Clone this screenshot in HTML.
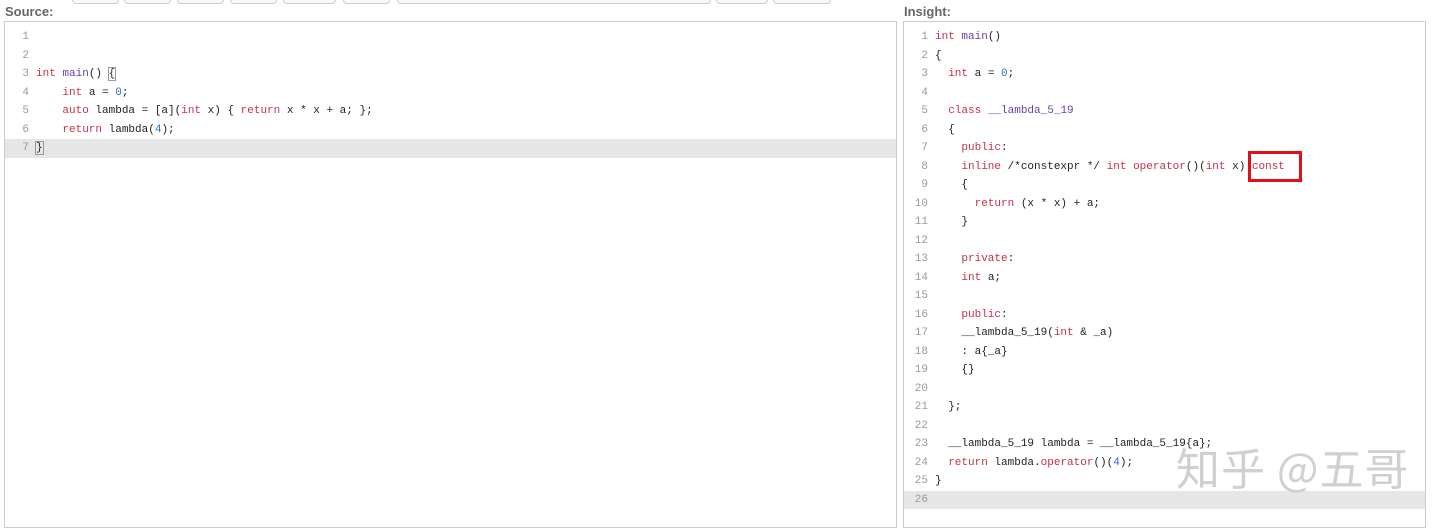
<!DOCTYPE html>
<html><head><meta charset="utf-8"><style>
body{margin:0;width:1440px;height:522px;background:#fff;position:relative;overflow:hidden;font-family:"Liberation Sans",sans-serif}
.lbl{position:absolute;top:4px;font-weight:bold;font-size:13px;color:#666}
.btn{position:absolute;top:-8px;height:10px;border:1px solid #ccc;border-radius:4px;background:#fafafa}
.panel{position:absolute;top:21px;border:1px solid #ccc;bottom:-6px}
.code{position:absolute;left:0;right:0;top:6px;font-family:"Liberation Mono",monospace;font-size:11px;color:#222}
.ln{height:18.5px;line-height:18.5px;white-space:pre;position:relative}
.n{display:inline-block;width:24px;text-align:right;color:#999;margin-right:7px}
.hl{background:#e6e6e6}
.k{color:#c8304a}.f{color:#6a3ea8}.d{color:#2f6fc0}
.wm{position:absolute;left:1176px;top:434px;font-family:"Noto Sans CJK SC",sans-serif;font-size:44px;color:#d0d0d0;letter-spacing:1px}
</style></head><body>
<div class="btn" style="left:72px;width:45px"></div>
<div class="btn" style="left:124px;width:45px"></div>
<div class="btn" style="left:177px;width:45px"></div>
<div class="btn" style="left:230px;width:45px"></div>
<div class="btn" style="left:283px;width:51px"></div>
<div class="btn" style="left:343px;width:45px"></div>
<div class="btn" style="left:397px;width:312px"></div>
<div class="btn" style="left:716px;width:50px"></div>
<div class="btn" style="left:773px;width:56px"></div>
<div class="lbl" style="left:5px">Source:</div>
<div class="lbl" style="left:904px">Insight:</div>
<div class="panel" style="left:4px;width:891px">
<div class="code">
<div class="ln"><span class="n">1</span></div>
<div class="ln"><span class="n">2</span></div>
<div class="ln"><span class="n">3</span><span class="k">int</span> <span class="f">main</span>() <span style="outline:1px solid #999">{</span></div>
<div class="ln"><span class="n">4</span>    <span class="k">int</span> a = <span class="d">0</span>;</div>
<div class="ln"><span class="n">5</span>    <span class="k">auto</span> lambda = [a](<span class="k">int</span> x) { <span class="k">return</span> x * x + a; };</div>
<div class="ln"><span class="n">6</span>    <span class="k">return</span> lambda(<span class="d">4</span>);</div>
<div class="ln hl"><span class="n">7</span><span style="outline:1px solid #999">}</span></div>
</div></div>
<div class="panel" style="left:903px;width:521px">
<div class="code">
<div class="ln"><span class="n">1</span><span class="k">int</span> <span class="f">main</span>()</div>
<div class="ln"><span class="n">2</span>{</div>
<div class="ln"><span class="n">3</span>  <span class="k">int</span> a = <span class="d">0</span>;</div>
<div class="ln"><span class="n">4</span></div>
<div class="ln"><span class="n">5</span>  <span class="k">class</span> <span class="f">__lambda_5_19</span></div>
<div class="ln"><span class="n">6</span>  {</div>
<div class="ln"><span class="n">7</span>    <span class="k">public</span>:</div>
<div class="ln"><span class="n">8</span>    <span class="k">inline</span> /*constexpr */ <span class="k">int</span> <span class="k">operator</span>()(<span class="k">int</span> x) <span class="k">const</span></div>
<div class="ln"><span class="n">9</span>    {</div>
<div class="ln"><span class="n">10</span>      <span class="k">return</span> (x * x) + a;</div>
<div class="ln"><span class="n">11</span>    }</div>
<div class="ln"><span class="n">12</span></div>
<div class="ln"><span class="n">13</span>    <span class="k">private</span>:</div>
<div class="ln"><span class="n">14</span>    <span class="k">int</span> a;</div>
<div class="ln"><span class="n">15</span></div>
<div class="ln"><span class="n">16</span>    <span class="k">public</span>:</div>
<div class="ln"><span class="n">17</span>    __lambda_5_19(<span class="k">int</span> &amp; _a)</div>
<div class="ln"><span class="n">18</span>    : a{_a}</div>
<div class="ln"><span class="n">19</span>    {}</div>
<div class="ln"><span class="n">20</span></div>
<div class="ln"><span class="n">21</span>  };</div>
<div class="ln"><span class="n">22</span></div>
<div class="ln"><span class="n">23</span>  __lambda_5_19 lambda = __lambda_5_19{a};</div>
<div class="ln"><span class="n">24</span>  <span class="k">return</span> lambda.<span class="k">operator</span>()(<span class="d">4</span>);</div>
<div class="ln"><span class="n">25</span>}</div>
<div class="ln hl"><span class="n">26</span></div>
</div></div>
<div style="position:absolute;left:1248px;top:151px;width:48px;height:25px;border:3px solid #e0101a"></div>
<div class="wm">知乎 @五哥</div>
</body></html>
